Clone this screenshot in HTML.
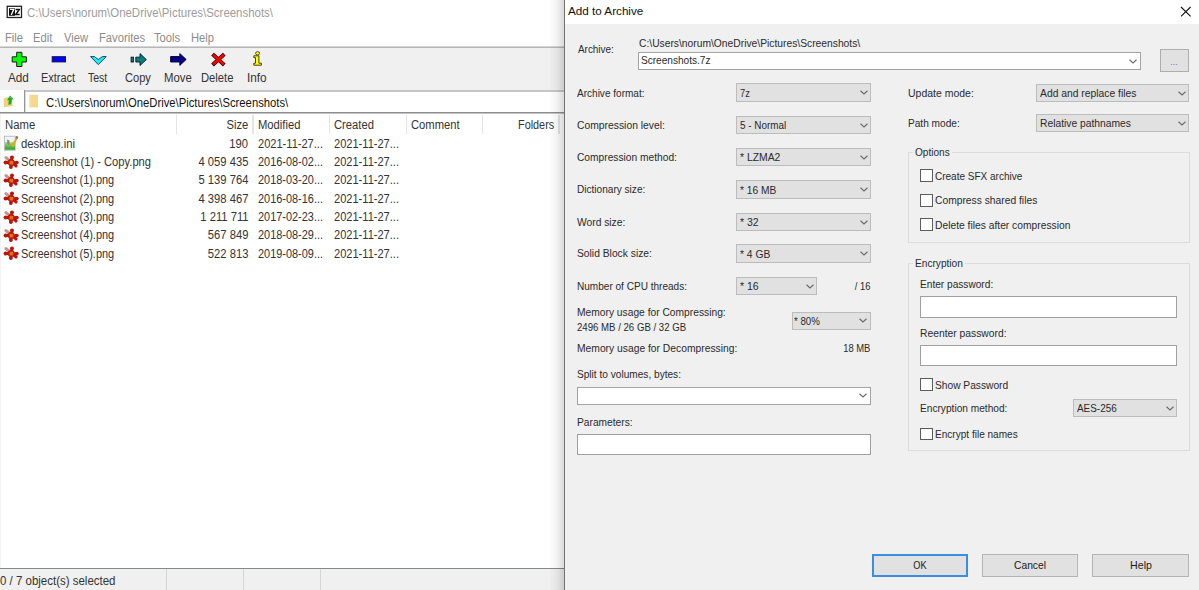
<!DOCTYPE html>
<html><head><meta charset="utf-8"><style>
html,body{margin:0;padding:0;width:1199px;height:590px;overflow:hidden;background:#fff;position:relative}
.t{position:absolute;white-space:nowrap;line-height:1;font-family:"Liberation Sans",sans-serif}
</style></head><body>
<div style="position:absolute;left:0px;top:0px;width:564px;height:47px;background:#fff"></div><div style="position:absolute;left:0px;top:46px;width:564px;height:1px;background:#d4d4d4"></div><div style="position:absolute;left:0px;top:47px;width:564px;height:1px;background:#b8b8b8"></div><div style="position:absolute;left:0px;top:48px;width:564px;height:42px;background:#f0f0f0"></div><div style="position:absolute;left:0px;top:90px;width:564px;height:23px;background:#fff"></div><div style="position:absolute;left:0px;top:113px;width:564px;height:455px;background:#fff"></div><div style="position:absolute;left:0px;top:113px;width:1px;height:455px;background:#f3f3f3"></div><div style="position:absolute;left:0px;top:112px;width:564px;height:1px;background:#8e8e8e"></div><div style="position:absolute;left:0px;top:113px;width:564px;height:1px;background:#c4c4c4"></div><div style="position:absolute;left:24px;top:90px;width:540px;height:2px;background:#c6c6c6"></div><div style="position:absolute;left:24px;top:90px;width:1px;height:23px;background:#969696"></div><div style="position:absolute;left:25px;top:92px;width:1px;height:20px;background:#dadada"></div><div style="position:absolute;left:0px;top:568px;width:564px;height:1px;background:#828790"></div><div style="position:absolute;left:0px;top:569px;width:564px;height:21px;background:#f0f0f0"></div><div style="position:absolute;left:176px;top:115px;width:1px;height:19px;background:#e5e5e5"></div><div style="position:absolute;left:252px;top:115px;width:2px;height:19px;background:#e5e5e5"></div><div style="position:absolute;left:329px;top:115px;width:1px;height:19px;background:#e5e5e5"></div><div style="position:absolute;left:406px;top:115px;width:1px;height:19px;background:#e5e5e5"></div><div style="position:absolute;left:482px;top:115px;width:1px;height:19px;background:#e5e5e5"></div><div style="position:absolute;left:558px;top:115px;width:2px;height:19px;background:#e5e5e5"></div><div style="position:absolute;left:166px;top:569px;width:1px;height:21px;background:#d5d5d5"></div><div style="position:absolute;left:243px;top:569px;width:1px;height:21px;background:#d5d5d5"></div><div style="position:absolute;left:320px;top:569px;width:1px;height:21px;background:#d5d5d5"></div><div style="position:absolute;left:564px;top:0px;width:635px;height:590px;background:#f0f0f0"></div><div style="position:absolute;left:549px;top:0px;width:15px;height:590px;background:linear-gradient(to right,rgba(0,0,0,0),rgba(0,0,0,0.05) 55%,rgba(0,0,0,0.15))"></div><div style="position:absolute;left:564px;top:0px;width:1px;height:590px;background:#747474"></div><div style="position:absolute;left:565px;top:0px;width:634px;height:24px;background:#fff"></div><div style="position:absolute;left:638px;top:52px;width:503px;height:18px;box-sizing:border-box;background:#fff;border:1px solid #a2a2a2"></div><svg style="position:absolute;left:1129.40px;top:58.50px" width="8" height="5" viewBox="0 0 8 5"><path d="M0.5 0.8 L4 3.9 L7.5 0.8" fill="none" stroke="#6a6a6a" stroke-width="1.15"/></svg><div style="position:absolute;left:1160px;top:49px;width:29px;height:23px;box-sizing:border-box;background:#e1e1e1;border:1px solid #adadad"></div><div style="position:absolute;left:736px;top:83px;width:135px;height:19px;box-sizing:border-box;background:#e1e1e1;border:1px solid #bcbcbc"></div><svg style="position:absolute;left:859.80px;top:90.30px" width="8" height="5" viewBox="0 0 8 5"><path d="M0.5 0.8 L4 3.9 L7.5 0.8" fill="none" stroke="#6a6a6a" stroke-width="1.15"/></svg><div style="position:absolute;left:736px;top:116px;width:135px;height:18px;box-sizing:border-box;background:#e1e1e1;border:1px solid #bcbcbc"></div><svg style="position:absolute;left:859.80px;top:122.70px" width="8" height="5" viewBox="0 0 8 5"><path d="M0.5 0.8 L4 3.9 L7.5 0.8" fill="none" stroke="#6a6a6a" stroke-width="1.15"/></svg><div style="position:absolute;left:736px;top:148px;width:135px;height:18px;box-sizing:border-box;background:#e1e1e1;border:1px solid #bcbcbc"></div><svg style="position:absolute;left:859.80px;top:154.90px" width="8" height="5" viewBox="0 0 8 5"><path d="M0.5 0.8 L4 3.9 L7.5 0.8" fill="none" stroke="#6a6a6a" stroke-width="1.15"/></svg><div style="position:absolute;left:736px;top:180px;width:135px;height:19px;box-sizing:border-box;background:#e1e1e1;border:1px solid #bcbcbc"></div><svg style="position:absolute;left:859.80px;top:187.40px" width="8" height="5" viewBox="0 0 8 5"><path d="M0.5 0.8 L4 3.9 L7.5 0.8" fill="none" stroke="#6a6a6a" stroke-width="1.15"/></svg><div style="position:absolute;left:736px;top:213px;width:135px;height:18px;box-sizing:border-box;background:#e1e1e1;border:1px solid #bcbcbc"></div><svg style="position:absolute;left:859.80px;top:219.70px" width="8" height="5" viewBox="0 0 8 5"><path d="M0.5 0.8 L4 3.9 L7.5 0.8" fill="none" stroke="#6a6a6a" stroke-width="1.15"/></svg><div style="position:absolute;left:736px;top:244px;width:135px;height:19px;box-sizing:border-box;background:#e1e1e1;border:1px solid #bcbcbc"></div><svg style="position:absolute;left:859.80px;top:251.40px" width="8" height="5" viewBox="0 0 8 5"><path d="M0.5 0.8 L4 3.9 L7.5 0.8" fill="none" stroke="#6a6a6a" stroke-width="1.15"/></svg><div style="position:absolute;left:736px;top:277px;width:81px;height:18px;box-sizing:border-box;background:#e1e1e1;border:1px solid #bcbcbc"></div><svg style="position:absolute;left:806.00px;top:283.80px" width="8" height="5" viewBox="0 0 8 5"><path d="M0.5 0.8 L4 3.9 L7.5 0.8" fill="none" stroke="#6a6a6a" stroke-width="1.15"/></svg><div style="position:absolute;left:792px;top:312px;width:79px;height:18px;box-sizing:border-box;background:#e1e1e1;border:1px solid #bcbcbc"></div><svg style="position:absolute;left:859.40px;top:318.45px" width="8" height="5" viewBox="0 0 8 5"><path d="M0.5 0.8 L4 3.9 L7.5 0.8" fill="none" stroke="#6a6a6a" stroke-width="1.15"/></svg><div style="position:absolute;left:577px;top:387px;width:294px;height:18px;box-sizing:border-box;background:#fff;border:1px solid #a2a2a2"></div><svg style="position:absolute;left:859.40px;top:393.45px" width="8" height="5" viewBox="0 0 8 5"><path d="M0.5 0.8 L4 3.9 L7.5 0.8" fill="none" stroke="#6a6a6a" stroke-width="1.15"/></svg><div style="position:absolute;left:577px;top:434px;width:294px;height:21px;box-sizing:border-box;background:#fff;border:1px solid #a0a0a0"></div><div style="position:absolute;left:1036px;top:84px;width:153px;height:18px;box-sizing:border-box;background:#e1e1e1;border:1px solid #bcbcbc"></div><svg style="position:absolute;left:1178.00px;top:90.50px" width="8" height="5" viewBox="0 0 8 5"><path d="M0.5 0.8 L4 3.9 L7.5 0.8" fill="none" stroke="#6a6a6a" stroke-width="1.15"/></svg><div style="position:absolute;left:1036px;top:114px;width:153px;height:18px;box-sizing:border-box;background:#e1e1e1;border:1px solid #bcbcbc"></div><svg style="position:absolute;left:1178.00px;top:121.10px" width="8" height="5" viewBox="0 0 8 5"><path d="M0.5 0.8 L4 3.9 L7.5 0.8" fill="none" stroke="#6a6a6a" stroke-width="1.15"/></svg><div style="position:absolute;left:908px;top:152px;width:282px;height:91px;box-sizing:border-box;border:1px solid #dcdcdc"></div><div style="position:absolute;left:913px;top:149px;width:39px;height:6px;background:#f0f0f0"></div><div style="position:absolute;left:920px;top:169px;width:13px;height:13px;box-sizing:border-box;background:#fff;border:1px solid #5c5c5c"></div><div style="position:absolute;left:920px;top:194px;width:13px;height:13px;box-sizing:border-box;background:#fff;border:1px solid #5c5c5c"></div><div style="position:absolute;left:920px;top:218px;width:13px;height:13px;box-sizing:border-box;background:#fff;border:1px solid #5c5c5c"></div><div style="position:absolute;left:908px;top:263px;width:282px;height:188px;box-sizing:border-box;border:1px solid #dcdcdc"></div><div style="position:absolute;left:913px;top:260px;width:52px;height:6px;background:#f0f0f0"></div><div style="position:absolute;left:920px;top:296px;width:257px;height:22px;box-sizing:border-box;background:#fff;border:1px solid #a0a0a0"></div><div style="position:absolute;left:920px;top:345px;width:257px;height:21px;box-sizing:border-box;background:#fff;border:1px solid #a0a0a0"></div><div style="position:absolute;left:920px;top:378px;width:13px;height:13px;box-sizing:border-box;background:#fff;border:1px solid #5c5c5c"></div><div style="position:absolute;left:1073px;top:399px;width:104px;height:18px;box-sizing:border-box;background:#e1e1e1;border:1px solid #bcbcbc"></div><svg style="position:absolute;left:1166.10px;top:405.65px" width="8" height="5" viewBox="0 0 8 5"><path d="M0.5 0.8 L4 3.9 L7.5 0.8" fill="none" stroke="#6a6a6a" stroke-width="1.15"/></svg><div style="position:absolute;left:920px;top:428px;width:13px;height:12px;box-sizing:border-box;background:#fff;border:1px solid #5c5c5c"></div><div style="position:absolute;left:872px;top:554px;width:96px;height:23px;box-sizing:border-box;background:#e1e1e1;border:2px solid #3a8ee0"></div><div style="position:absolute;left:982px;top:554px;width:96px;height:23px;box-sizing:border-box;background:#e1e1e1;border:1px solid #b4b4b4"></div><div style="position:absolute;left:1092px;top:554px;width:97px;height:23px;box-sizing:border-box;background:#e1e1e1;border:1px solid #b4b4b4"></div><svg style="position:absolute;left:1180px;top:6px" width="12" height="12" viewBox="0 0 12 12"><path d="M1 1 L10.6 10.4 M10.6 1 L1 10.4" stroke="#111" stroke-width="1.1"/></svg>
<svg style="position:absolute;left:0;top:0" width="300" height="270" viewBox="0 0 300 270">
<!-- 7z app icon -->
<rect x="7.2" y="6.3" width="14.3" height="11.2" fill="#fff" stroke="#222" stroke-width="1.3"/>
<rect x="9" y="8.2" width="6" height="7.6" fill="#111"/>
<path d="M10 9.3 H13.8 L11.2 15" fill="none" stroke="#fff" stroke-width="1.3"/>
<path d="M15.6 9.5 H19.3 L15.8 14.6 H19.6" fill="none" stroke="#111" stroke-width="1.5"/>
<!-- Add plus -->
<path d="M16.7 52.3 H21.9 V56.8 H26.4 V62 H21.9 V66.5 H16.7 V62 H12.2 V56.8 H16.7 Z" fill="#00ff00" stroke="#1a1a1a" stroke-width="1"/>
<!-- Extract minus -->
<rect x="52.2" y="56.7" width="13.3" height="5.2" fill="#0000ff" stroke="#10104a" stroke-width="1"/>
<!-- Test V -->
<path d="M90.6 56.6 H94.4 L98.3 59.6 L102.4 56.6 H106.2 L98.3 64.6 Z" fill="#00ffff" stroke="#303060" stroke-width="1"/>
<!-- Copy arrow -->
<rect x="131.1" y="57.2" width="2.3" height="4.8" fill="#008080" stroke="#111" stroke-width="0.9"/>
<path d="M135.8 57.2 H140 V53.6 L146.3 59.6 L140 65.5 V62 H135.8 Z" fill="#008080" stroke="#111" stroke-width="0.9"/>
<!-- Move arrow -->
<path d="M170.6 56.5 H179.8 V53.6 L186.2 59.4 L179.8 65.4 V62 H170.6 Z" fill="#000080" stroke="#000040" stroke-width="0.9"/>
<!-- Delete X -->
<path d="M214 55.5 L222.8 63.6 M222.8 55.5 L214 63.6" stroke="#3a0000" stroke-width="4" stroke-linecap="square"/>
<path d="M214 55.5 L222.8 63.6 M222.8 55.5 L214 63.6" stroke="#ff0000" stroke-width="2.5" stroke-linecap="square"/>
<!-- Info i -->
<ellipse cx="257.6" cy="53.3" rx="2.1" ry="1.6" fill="#ffff00" stroke="#4a3a20" stroke-width="0.9"/>
<path d="M253.8 55.8 H258.9 V63.2 H261.4 V65.2 H253.8 V63.2 H255.5 V57.6 H253.8 Z" fill="#ffff00" stroke="#3a3000" stroke-width="0.9"/>
<!-- Up folder icon -->
<path d="M3.6 98.5 L7 97.3 L11.5 98.5 L12.8 106 L4 107.3 Z" fill="#f0d27c"/>
<path d="M8.3 104.8 L8.8 100.2 L7 100.2 L10 95.4 L13.6 99.3 L11.8 99.6 L11.2 104.2 Z" fill="#22a822"/><path d="M9.5 97.5 L11.5 97.8" stroke="#56d856" stroke-width="1"/>
<!-- folder in address -->
<rect x="29" y="94.8" width="9" height="12.6" fill="#f4d98a"/>
<rect x="29" y="94.8" width="1.5" height="12.6" fill="#f8e7b0"/>
<!-- desktop.ini icon -->
<defs><linearGradient id="gini" x1="0" y1="0" x2="0" y2="1"><stop offset="0" stop-color="#c8e878"/><stop offset="1" stop-color="#2aa02a"/></linearGradient></defs>
<rect x="4.4" y="136.2" width="10.8" height="14" fill="#f2f5f8" stroke="#b4b4bc" stroke-width="0.9"/>
<path d="M4.9 142.5 L8 141.5 L11 142.5 L15 140.5 V149.8 H4.9 Z" fill="url(#gini)"/>
<path d="M7 139.6 L9.6 140.6 L9.2 145 L7.4 144.2 Z" fill="#8a8a8a"/>
<path d="M17.4 136.4 L12.6 146.6" stroke="#e6a632" stroke-width="2.2"/>
<path d="M17.4 136.4 L16.3 138.6" stroke="#8a7060" stroke-width="2.2"/>
</svg>
<svg style="position:absolute;left:2px;top:153.70px" width="18" height="17" viewBox="0 0 18 17">
<g stroke-linecap="round" fill="none">
<path d="M4 3.6 L8.5 7.5" stroke="#c49490" stroke-width="3.2"/>
<path d="M9.2 8.5 L10 3.3 M9.2 8.5 L3.8 8.5 M9.2 8.5 L14.6 8.7 M9.2 8.5 L8.9 12.9 M9.2 8.5 L13.9 11.7" stroke="#b81410" stroke-width="2.8"/>
</g>
<g fill="#b81410"><circle cx="10" cy="3.3" r="1.9"/><circle cx="3.6" cy="8.5" r="2"/><circle cx="14.8" cy="8.6" r="1.9"/><circle cx="8.9" cy="13" r="1.9"/><circle cx="14" cy="11.9" r="1.5"/></g>
<circle cx="9.2" cy="8.5" r="3.4" fill="#b81410"/>
<rect x="7.5" y="6.8" width="3.8" height="3.6" rx="1" fill="#e2720c"/>
</svg><svg style="position:absolute;left:2px;top:172.03px" width="18" height="17" viewBox="0 0 18 17">
<g stroke-linecap="round" fill="none">
<path d="M4 3.6 L8.5 7.5" stroke="#c49490" stroke-width="3.2"/>
<path d="M9.2 8.5 L10 3.3 M9.2 8.5 L3.8 8.5 M9.2 8.5 L14.6 8.7 M9.2 8.5 L8.9 12.9 M9.2 8.5 L13.9 11.7" stroke="#b81410" stroke-width="2.8"/>
</g>
<g fill="#b81410"><circle cx="10" cy="3.3" r="1.9"/><circle cx="3.6" cy="8.5" r="2"/><circle cx="14.8" cy="8.6" r="1.9"/><circle cx="8.9" cy="13" r="1.9"/><circle cx="14" cy="11.9" r="1.5"/></g>
<circle cx="9.2" cy="8.5" r="3.4" fill="#b81410"/>
<rect x="7.5" y="6.8" width="3.8" height="3.6" rx="1" fill="#e2720c"/>
</svg><svg style="position:absolute;left:2px;top:190.36px" width="18" height="17" viewBox="0 0 18 17">
<g stroke-linecap="round" fill="none">
<path d="M4 3.6 L8.5 7.5" stroke="#c49490" stroke-width="3.2"/>
<path d="M9.2 8.5 L10 3.3 M9.2 8.5 L3.8 8.5 M9.2 8.5 L14.6 8.7 M9.2 8.5 L8.9 12.9 M9.2 8.5 L13.9 11.7" stroke="#b81410" stroke-width="2.8"/>
</g>
<g fill="#b81410"><circle cx="10" cy="3.3" r="1.9"/><circle cx="3.6" cy="8.5" r="2"/><circle cx="14.8" cy="8.6" r="1.9"/><circle cx="8.9" cy="13" r="1.9"/><circle cx="14" cy="11.9" r="1.5"/></g>
<circle cx="9.2" cy="8.5" r="3.4" fill="#b81410"/>
<rect x="7.5" y="6.8" width="3.8" height="3.6" rx="1" fill="#e2720c"/>
</svg><svg style="position:absolute;left:2px;top:208.69px" width="18" height="17" viewBox="0 0 18 17">
<g stroke-linecap="round" fill="none">
<path d="M4 3.6 L8.5 7.5" stroke="#c49490" stroke-width="3.2"/>
<path d="M9.2 8.5 L10 3.3 M9.2 8.5 L3.8 8.5 M9.2 8.5 L14.6 8.7 M9.2 8.5 L8.9 12.9 M9.2 8.5 L13.9 11.7" stroke="#b81410" stroke-width="2.8"/>
</g>
<g fill="#b81410"><circle cx="10" cy="3.3" r="1.9"/><circle cx="3.6" cy="8.5" r="2"/><circle cx="14.8" cy="8.6" r="1.9"/><circle cx="8.9" cy="13" r="1.9"/><circle cx="14" cy="11.9" r="1.5"/></g>
<circle cx="9.2" cy="8.5" r="3.4" fill="#b81410"/>
<rect x="7.5" y="6.8" width="3.8" height="3.6" rx="1" fill="#e2720c"/>
</svg><svg style="position:absolute;left:2px;top:227.02px" width="18" height="17" viewBox="0 0 18 17">
<g stroke-linecap="round" fill="none">
<path d="M4 3.6 L8.5 7.5" stroke="#c49490" stroke-width="3.2"/>
<path d="M9.2 8.5 L10 3.3 M9.2 8.5 L3.8 8.5 M9.2 8.5 L14.6 8.7 M9.2 8.5 L8.9 12.9 M9.2 8.5 L13.9 11.7" stroke="#b81410" stroke-width="2.8"/>
</g>
<g fill="#b81410"><circle cx="10" cy="3.3" r="1.9"/><circle cx="3.6" cy="8.5" r="2"/><circle cx="14.8" cy="8.6" r="1.9"/><circle cx="8.9" cy="13" r="1.9"/><circle cx="14" cy="11.9" r="1.5"/></g>
<circle cx="9.2" cy="8.5" r="3.4" fill="#b81410"/>
<rect x="7.5" y="6.8" width="3.8" height="3.6" rx="1" fill="#e2720c"/>
</svg><svg style="position:absolute;left:2px;top:245.35px" width="18" height="17" viewBox="0 0 18 17">
<g stroke-linecap="round" fill="none">
<path d="M4 3.6 L8.5 7.5" stroke="#c49490" stroke-width="3.2"/>
<path d="M9.2 8.5 L10 3.3 M9.2 8.5 L3.8 8.5 M9.2 8.5 L14.6 8.7 M9.2 8.5 L8.9 12.9 M9.2 8.5 L13.9 11.7" stroke="#b81410" stroke-width="2.8"/>
</g>
<g fill="#b81410"><circle cx="10" cy="3.3" r="1.9"/><circle cx="3.6" cy="8.5" r="2"/><circle cx="14.8" cy="8.6" r="1.9"/><circle cx="8.9" cy="13" r="1.9"/><circle cx="14" cy="11.9" r="1.5"/></g>
<circle cx="9.2" cy="8.5" r="3.4" fill="#b81410"/>
<rect x="7.5" y="6.8" width="3.8" height="3.6" rx="1" fill="#e2720c"/>
</svg>
<span id="t0" class="t" style="left:27.20px;top:7.44px;font-size:12.0px;color:#9c9c9c;transform:scaleX(0.9531);transform-origin:left 0;">C:\Users\norum\OneDrive\Pictures\Screenshots\</span><span id="t1" class="t" style="left:4.60px;top:32.04px;font-size:12.0px;color:#8c8c8c;transform:scaleX(0.9350);transform-origin:left 0;">File</span><span id="t2" class="t" style="left:33.00px;top:32.04px;font-size:12.0px;color:#8c8c8c;transform:scaleX(0.9350);transform-origin:left 0;">Edit</span><span id="t3" class="t" style="left:63.60px;top:32.04px;font-size:12.0px;color:#8c8c8c;transform:scaleX(0.9350);transform-origin:left 0;">View</span><span id="t4" class="t" style="left:98.70px;top:32.04px;font-size:12.0px;color:#8c8c8c;transform:scaleX(0.9350);transform-origin:left 0;">Favorites</span><span id="t5" class="t" style="left:154.30px;top:32.04px;font-size:12.0px;color:#8c8c8c;transform:scaleX(0.9350);transform-origin:left 0;">Tools</span><span id="t6" class="t" style="left:191.20px;top:32.04px;font-size:12.0px;color:#8c8c8c;transform:scaleX(0.9350);transform-origin:left 0;">Help</span><span id="t7" class="t" style="left:7.60px;top:71.84px;font-size:12.0px;color:#333;transform:scaleX(0.9785);transform-origin:left 0;">Add</span><span id="t8" class="t" style="left:41.40px;top:71.84px;font-size:12.0px;color:#333;transform:scaleX(0.9131);transform-origin:left 0;">Extract</span><span id="t9" class="t" style="left:88.20px;top:71.84px;font-size:12.0px;color:#333;transform:scaleX(0.8766);transform-origin:left 0;">Test</span><span id="t10" class="t" style="left:124.60px;top:71.84px;font-size:12.0px;color:#333;transform:scaleX(0.9245);transform-origin:left 0;">Copy</span><span id="t11" class="t" style="left:163.50px;top:71.84px;font-size:12.0px;color:#333;transform:scaleX(0.9439);transform-origin:left 0;">Move</span><span id="t12" class="t" style="left:200.90px;top:71.84px;font-size:12.0px;color:#333;transform:scaleX(0.9370);transform-origin:left 0;">Delete</span><span id="t13" class="t" style="left:246.60px;top:71.84px;font-size:12.0px;color:#333;transform:scaleX(0.9792);transform-origin:left 0;">Info</span><span id="t14" class="t" style="left:45.80px;top:96.94px;font-size:12.0px;color:#111;transform:scaleX(0.9384);transform-origin:left 0;">C:\Users\norum\OneDrive\Pictures\Screenshots\</span><span id="t15" class="t" style="left:5.40px;top:118.74px;font-size:12.0px;color:#333;transform:scaleX(0.9433);transform-origin:left 0;">Name</span><span id="t16" class="t" style="right:951.10px;top:118.74px;font-size:12.0px;color:#333;transform:scaleX(0.9350);transform-origin:right 0;">Size</span><span id="t17" class="t" style="left:257.60px;top:118.74px;font-size:12.0px;color:#333;transform:scaleX(0.9350);transform-origin:left 0;">Modified</span><span id="t18" class="t" style="left:334.20px;top:118.74px;font-size:12.0px;color:#333;transform:scaleX(0.9350);transform-origin:left 0;">Created</span><span id="t19" class="t" style="left:411.00px;top:118.74px;font-size:12.0px;color:#333;transform:scaleX(0.9350);transform-origin:left 0;">Comment</span><span id="t20" class="t" style="left:518.00px;top:118.74px;font-size:12.0px;color:#333;transform:scaleX(0.9046);transform-origin:left 0;">Folders</span><span id="t21" class="t" style="left:20.90px;top:137.74px;font-size:12.0px;color:#333;transform:scaleX(0.9412);transform-origin:left 0;">desktop.ini</span><span id="t22" class="t" style="right:950.90px;top:137.74px;font-size:12.0px;color:#333;transform:scaleX(0.9350);transform-origin:right 0;">190</span><span id="t23" class="t" style="left:257.60px;top:137.74px;font-size:12.0px;color:#333;transform:scaleX(0.9220);transform-origin:left 0;">2021-11-27...</span><span id="t24" class="t" style="left:334.20px;top:137.74px;font-size:12.0px;color:#333;transform:scaleX(0.9220);transform-origin:left 0;">2021-11-27...</span><span id="t25" class="t" style="left:20.90px;top:156.07px;font-size:12.0px;color:#333;transform:scaleX(0.9295);transform-origin:left 0;">Screenshot (1) - Copy.png</span><span id="t26" class="t" style="right:950.90px;top:156.07px;font-size:12.0px;color:#333;transform:scaleX(0.9350);transform-origin:right 0;">4 059 435</span><span id="t27" class="t" style="left:257.60px;top:156.07px;font-size:12.0px;color:#333;transform:scaleX(0.9105);transform-origin:left 0;">2016-08-02...</span><span id="t28" class="t" style="left:334.20px;top:156.07px;font-size:12.0px;color:#333;transform:scaleX(0.9220);transform-origin:left 0;">2021-11-27...</span><span id="t29" class="t" style="left:20.90px;top:174.40px;font-size:12.0px;color:#333;transform:scaleX(0.9132);transform-origin:left 0;">Screenshot (1).png</span><span id="t30" class="t" style="right:950.90px;top:174.40px;font-size:12.0px;color:#333;transform:scaleX(0.9350);transform-origin:right 0;">5 139 764</span><span id="t31" class="t" style="left:257.60px;top:174.40px;font-size:12.0px;color:#333;transform:scaleX(0.9105);transform-origin:left 0;">2018-03-20...</span><span id="t32" class="t" style="left:334.20px;top:174.40px;font-size:12.0px;color:#333;transform:scaleX(0.9220);transform-origin:left 0;">2021-11-27...</span><span id="t33" class="t" style="left:20.90px;top:192.73px;font-size:12.0px;color:#333;transform:scaleX(0.9132);transform-origin:left 0;">Screenshot (2).png</span><span id="t34" class="t" style="right:950.90px;top:192.73px;font-size:12.0px;color:#333;transform:scaleX(0.9350);transform-origin:right 0;">4 398 467</span><span id="t35" class="t" style="left:257.60px;top:192.73px;font-size:12.0px;color:#333;transform:scaleX(0.9105);transform-origin:left 0;">2016-08-16...</span><span id="t36" class="t" style="left:334.20px;top:192.73px;font-size:12.0px;color:#333;transform:scaleX(0.9220);transform-origin:left 0;">2021-11-27...</span><span id="t37" class="t" style="left:20.90px;top:211.06px;font-size:12.0px;color:#333;transform:scaleX(0.9132);transform-origin:left 0;">Screenshot (3).png</span><span id="t38" class="t" style="right:950.90px;top:211.06px;font-size:12.0px;color:#333;transform:scaleX(0.9350);transform-origin:right 0;">1 211 711</span><span id="t39" class="t" style="left:257.60px;top:211.06px;font-size:12.0px;color:#333;transform:scaleX(0.9105);transform-origin:left 0;">2017-02-23...</span><span id="t40" class="t" style="left:334.20px;top:211.06px;font-size:12.0px;color:#333;transform:scaleX(0.9220);transform-origin:left 0;">2021-11-27...</span><span id="t41" class="t" style="left:20.90px;top:229.39px;font-size:12.0px;color:#333;transform:scaleX(0.9132);transform-origin:left 0;">Screenshot (4).png</span><span id="t42" class="t" style="right:950.90px;top:229.39px;font-size:12.0px;color:#333;transform:scaleX(0.9350);transform-origin:right 0;">567 849</span><span id="t43" class="t" style="left:257.60px;top:229.39px;font-size:12.0px;color:#333;transform:scaleX(0.9105);transform-origin:left 0;">2018-08-29...</span><span id="t44" class="t" style="left:334.20px;top:229.39px;font-size:12.0px;color:#333;transform:scaleX(0.9220);transform-origin:left 0;">2021-11-27...</span><span id="t45" class="t" style="left:20.90px;top:247.72px;font-size:12.0px;color:#333;transform:scaleX(0.9132);transform-origin:left 0;">Screenshot (5).png</span><span id="t46" class="t" style="right:950.90px;top:247.72px;font-size:12.0px;color:#333;transform:scaleX(0.9350);transform-origin:right 0;">522 813</span><span id="t47" class="t" style="left:257.60px;top:247.72px;font-size:12.0px;color:#333;transform:scaleX(0.9105);transform-origin:left 0;">2019-08-09...</span><span id="t48" class="t" style="left:334.20px;top:247.72px;font-size:12.0px;color:#333;transform:scaleX(0.9220);transform-origin:left 0;">2021-11-27...</span><span id="t49" class="t" style="left:0.30px;top:575.14px;font-size:12.0px;color:#333;transform:scaleX(0.9567);transform-origin:left 0;">0 / 7 object(s) selected</span><span id="t50" class="t" style="left:568.40px;top:5.82px;font-size:11.2px;color:#111;transform:scaleX(1.0438);transform-origin:left 0;">Add to Archive</span><span id="t51" class="t" style="left:577.50px;top:43.61px;font-size:10.5px;color:#2a2a2a;transform:scaleX(0.9436);transform-origin:left 0;">Archive:</span><span id="t52" class="t" style="left:638.80px;top:37.81px;font-size:10.5px;color:#2a2a2a;transform:scaleX(0.9795);transform-origin:left 0;">C:\Users\norum\OneDrive\Pictures\Screenshots\</span><span id="t53" class="t" style="left:640.80px;top:54.91px;font-size:10.5px;color:#2a2a2a;transform:scaleX(0.9603);transform-origin:left 0;">Screenshots.7z</span><span id="t54" class="t" style="left:1170.30px;top:57.68px;font-size:9px;color:#7a7488;">...</span><span id="t55" class="t" style="left:577.30px;top:87.81px;font-size:10.5px;color:#2a2a2a;transform:scaleX(0.9559);transform-origin:left 0;">Archive format:</span><span id="t56" class="t" style="left:577.30px;top:119.91px;font-size:10.5px;color:#2a2a2a;transform:scaleX(0.9844);transform-origin:left 0;">Compression level:</span><span id="t57" class="t" style="left:577.30px;top:151.81px;font-size:10.5px;color:#2a2a2a;transform:scaleX(0.9726);transform-origin:left 0;">Compression method:</span><span id="t58" class="t" style="left:577.30px;top:184.01px;font-size:10.5px;color:#2a2a2a;transform:scaleX(0.9592);transform-origin:left 0;">Dictionary size:</span><span id="t59" class="t" style="left:577.30px;top:216.51px;font-size:10.5px;color:#2a2a2a;transform:scaleX(0.9776);transform-origin:left 0;">Word size:</span><span id="t60" class="t" style="left:577.30px;top:248.41px;font-size:10.5px;color:#2a2a2a;transform:scaleX(0.9797);transform-origin:left 0;">Solid Block size:</span><span id="t61" class="t" style="left:577.30px;top:280.61px;font-size:10.5px;color:#2a2a2a;transform:scaleX(0.9568);transform-origin:left 0;">Number of CPU threads:</span><span id="t62" class="t" style="left:739.80px;top:87.61px;font-size:10.5px;color:#2a2a2a;transform:scaleX(0.8834);transform-origin:left 0;">7z</span><span id="t63" class="t" style="left:739.80px;top:120.01px;font-size:10.5px;color:#2a2a2a;transform:scaleX(0.9446);transform-origin:left 0;">5 - Normal</span><span id="t64" class="t" style="left:739.80px;top:152.21px;font-size:10.5px;color:#2a2a2a;transform:scaleX(0.9887);transform-origin:left 0;">* LZMA2</span><span id="t65" class="t" style="left:739.80px;top:184.71px;font-size:10.5px;color:#2a2a2a;transform:scaleX(0.9717);transform-origin:left 0;">* 16 MB</span><span id="t66" class="t" style="left:739.80px;top:217.01px;font-size:10.5px;color:#2a2a2a;transform:scaleX(1.0007);transform-origin:left 0;">* 32</span><span id="t67" class="t" style="left:739.80px;top:248.71px;font-size:10.5px;color:#2a2a2a;transform:scaleX(0.9794);transform-origin:left 0;">* 4 GB</span><span id="t68" class="t" style="left:739.80px;top:281.31px;font-size:10.5px;color:#2a2a2a;transform:scaleX(1.0007);transform-origin:left 0;">* 16</span><span id="t69" class="t" style="right:328.00px;top:280.61px;font-size:10.5px;color:#2a2a2a;transform:scaleX(0.8964);transform-origin:right 0;">/ 16</span><span id="t70" class="t" style="left:577.20px;top:306.61px;font-size:10.5px;color:#2a2a2a;transform:scaleX(0.9763);transform-origin:left 0;">Memory usage for Compressing:</span><span id="t71" class="t" style="left:577.20px;top:321.61px;font-size:10.5px;color:#2a2a2a;transform:scaleX(0.9162);transform-origin:left 0;">2496 MB / 26 GB / 32 GB</span><span id="t72" class="t" style="left:794.40px;top:315.71px;font-size:10.5px;color:#2a2a2a;transform:scaleX(0.9239);transform-origin:left 0;">* 80%</span><span id="t73" class="t" style="left:577.20px;top:343.31px;font-size:10.5px;color:#2a2a2a;transform:scaleX(0.9810);transform-origin:left 0;">Memory usage for Decompressing:</span><span id="t74" class="t" style="right:328.30px;top:343.31px;font-size:10.5px;color:#2a2a2a;transform:scaleX(0.8960);transform-origin:right 0;">18 MB</span><span id="t75" class="t" style="left:577.20px;top:369.21px;font-size:10.5px;color:#2a2a2a;transform:scaleX(0.9632);transform-origin:left 0;">Split to volumes, bytes:</span><span id="t76" class="t" style="left:577.20px;top:416.51px;font-size:10.5px;color:#2a2a2a;transform:scaleX(0.9722);transform-origin:left 0;">Parameters:</span><span id="t77" class="t" style="left:908.20px;top:87.81px;font-size:10.5px;color:#2a2a2a;transform:scaleX(0.9974);transform-origin:left 0;">Update mode:</span><span id="t78" class="t" style="left:1039.70px;top:87.81px;font-size:10.5px;color:#2a2a2a;transform:scaleX(0.9839);transform-origin:left 0;">Add and replace files</span><span id="t79" class="t" style="left:908.20px;top:118.01px;font-size:10.5px;color:#2a2a2a;transform:scaleX(0.9627);transform-origin:left 0;">Path mode:</span><span id="t80" class="t" style="left:1039.70px;top:118.31px;font-size:10.5px;color:#2a2a2a;transform:scaleX(0.9805);transform-origin:left 0;">Relative pathnames</span><span id="t81" class="t" style="left:915.00px;top:147.21px;font-size:10.5px;color:#2a2a2a;transform:scaleX(0.9589);transform-origin:left 0;">Options</span><span id="t82" class="t" style="left:934.70px;top:170.71px;font-size:10.5px;color:#2a2a2a;transform:scaleX(0.9528);transform-origin:left 0;">Create SFX archive</span><span id="t83" class="t" style="left:934.70px;top:195.11px;font-size:10.5px;color:#2a2a2a;transform:scaleX(0.9792);transform-origin:left 0;">Compress shared files</span><span id="t84" class="t" style="left:934.70px;top:219.71px;font-size:10.5px;color:#2a2a2a;transform:scaleX(0.9789);transform-origin:left 0;">Delete files after compression</span><span id="t85" class="t" style="left:915.00px;top:258.01px;font-size:10.5px;color:#2a2a2a;transform:scaleX(0.9655);transform-origin:left 0;">Encryption</span><span id="t86" class="t" style="left:920.00px;top:278.91px;font-size:10.5px;color:#2a2a2a;transform:scaleX(0.9647);transform-origin:left 0;">Enter password:</span><span id="t87" class="t" style="left:920.00px;top:328.11px;font-size:10.5px;color:#2a2a2a;transform:scaleX(0.9814);transform-origin:left 0;">Reenter password:</span><span id="t88" class="t" style="left:934.80px;top:380.01px;font-size:10.5px;color:#2a2a2a;transform:scaleX(0.9722);transform-origin:left 0;">Show Password</span><span id="t89" class="t" style="left:920.00px;top:402.91px;font-size:10.5px;color:#2a2a2a;transform:scaleX(0.9661);transform-origin:left 0;">Encryption method:</span><span id="t90" class="t" style="left:1076.70px;top:402.91px;font-size:10.5px;color:#2a2a2a;transform:scaleX(0.9446);transform-origin:left 0;">AES-256</span><span id="t91" class="t" style="left:934.80px;top:429.11px;font-size:10.5px;color:#2a2a2a;transform:scaleX(0.9575);transform-origin:left 0;">Encrypt file names</span><span id="t92" class="t" style="left:920.15px;transform:translateX(-50%);top:560.41px;font-size:10.5px;color:#1a1a1a;transform:translateX(-50%) scaleX(0.8766);">OK</span><span id="t93" class="t" style="left:1030.45px;transform:translateX(-50%);top:560.41px;font-size:10.5px;color:#1a1a1a;transform:translateX(-50%) scaleX(0.9790);">Cancel</span><span id="t94" class="t" style="left:1140.55px;transform:translateX(-50%);top:560.41px;font-size:10.5px;color:#1a1a1a;transform:translateX(-50%) scaleX(1.0088);">Help</span>
</body></html>
